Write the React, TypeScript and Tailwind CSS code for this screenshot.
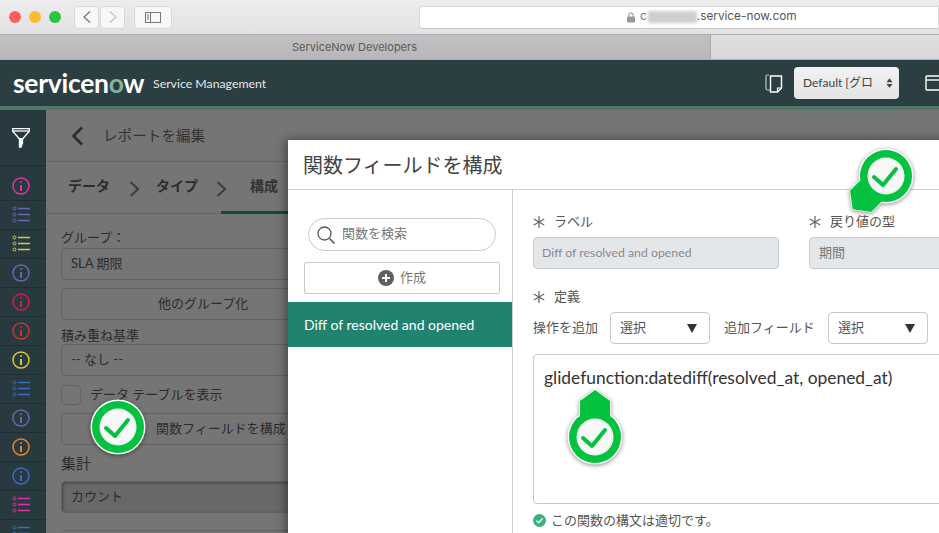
import React from 'react';

const FONT = "font-['Lato','Noto_Sans_CJK_JP',sans-serif]";

type RailItem = { kind: 'info' | 'list'; color: string };

const railItems: RailItem[] = [
  { kind: 'info', color: '#e0339f' },
  { kind: 'list', color: '#6468b0' },
  { kind: 'list', color: '#d8cb38' },
  { kind: 'info', color: '#6468b0' },
  { kind: 'info', color: '#d01f45' },
  { kind: 'info', color: '#c9352f' },
  { kind: 'info', color: '#d8cb38' },
  { kind: 'list', color: '#3a6cc0' },
  { kind: 'info', color: '#6468b0' },
  { kind: 'info', color: '#e8842c' },
  { kind: 'info', color: '#3a6cc0' },
  { kind: 'list', color: '#e0339f' },
  { kind: 'list', color: '#3a6cc0' },
];

function InfoIcon({ color }: { color: string }) {
  return (
    <svg width="20" height="20" viewBox="0 0 20 20" fill="none" stroke={color}>
      <circle cx="10" cy="10" r="8" strokeWidth="1.5" />
      <circle cx="10" cy="6" r="1" fill={color} stroke="none" />
      <path d="M10 9v6" strokeWidth="2" />
    </svg>
  );
}

function ListIcon({ color }: { color: string }) {
  return (
    <svg width="20" height="20" viewBox="0 0 20 20" fill="none" stroke={color}>
      <circle cx="3.5" cy="3.5" r="1.5" strokeWidth="1" />
      <circle cx="3.5" cy="9.5" r="1.5" strokeWidth="1" />
      <circle cx="3.5" cy="15.5" r="1.5" strokeWidth="1" />
      <path d="M7 3.5h12M7 9.5h12M7 15.5h12" strokeWidth="1.5" />
    </svg>
  );
}

function Marker({ pointer, className }: { pointer?: number; className: string }) {
  return (
    <svg
      width="120"
      height="120"
      viewBox="-60 -60 120 120"
      className={`absolute drop-shadow-[0_1px_2px_rgba(0,0,0,0.45)] ${className}`}
    >
      {pointer !== undefined && (
        <path
          transform={`rotate(${pointer})`}
          d="M0 -47 L15 -36 L15 -15 L-15 -15 L-15 -36 Z"
          fill="#04c23f"
          stroke="#fff"
          strokeWidth="1.5"
        />
      )}
      <circle r="27.5" fill="#fff" />
      {pointer !== undefined && (
        <path transform={`rotate(${pointer})`} d="M0 -47 L15 -36 L15 -15 L-15 -15 L-15 -36 Z" fill="#04c23f" />
      )}
      <circle r="26" fill="#04c23f" />
      <circle r="18.5" fill="#fff" />
      <circle r="17.5" fill="#f8f8f8" stroke="#ddd" strokeWidth="0.75" />
      <path d="M-12 1 L-3 9 L10 -7" fill="none" stroke="#04c23f" strokeWidth="4" strokeLinecap="round" strokeLinejoin="round" />
    </svg>
  );
}

function Chrome() {
  return (
    <>
      <div className="flex h-[34px] items-center bg-gradient-to-b from-[#eeecee] to-[#e3e1e3] pl-[9px]">
        <div className="flex gap-2">
          <span className="h-3 w-3 rounded-full bg-[#fc5f57]" />
          <span className="h-3 w-3 rounded-full bg-[#fdbb2e]" />
          <span className="h-3 w-3 rounded-full bg-[#29c73f]" />
        </div>
        <div className="ml-[13px] flex gap-px">
          <div className="flex h-[23px] w-[25px] items-center justify-center rounded border border-[#d9d7d9] bg-[#f8f7f8]">
            <svg width="10" height="14" viewBox="0 0 10 14" fill="none" stroke="#777" strokeWidth="1.3">
              <path d="M8 1.5 2 7l6 5.5" />
            </svg>
          </div>
          <div className="flex h-[23px] w-[25px] items-center justify-center rounded border border-[#d9d7d9] bg-[#f8f7f8]">
            <svg width="10" height="14" viewBox="0 0 10 14" fill="none" stroke="#c4c4c4" strokeWidth="1.3">
              <path d="M2 1.5 8 7l-6 5.5" />
            </svg>
          </div>
        </div>
        <div className="ml-[9px] flex h-[23px] w-[38px] items-center justify-center rounded border border-[#d9d7d9] bg-[#f8f7f8]">
          <svg width="16" height="13" viewBox="0 0 16 13" fill="none" stroke="#777">
            <rect x="0.5" y="1.5" width="15" height="10" />
            <path d="M5.5 1.5v10M2 4h2M2 6h2M2 8h2" />
          </svg>
        </div>
        <div className="ml-[247px] flex h-[23px] flex-1 items-center rounded-l border border-[#dcdadc] border-b-[#c8c8c8] bg-white pl-[206px] text-[11.8px] text-[#555] font-['Inter',sans-serif]">
          <svg width="10" height="11" viewBox="0 0 10 11" className="mr-[4px]">
            <rect x="1" y="4.5" width="8" height="6" rx="1" fill="#999" />
            <path d="M2.8 5V3.2a2.2 2.2 0 0 1 4.4 0V5" fill="none" stroke="#999" strokeWidth="1.1" />
          </svg>
          <span className="mr-px text-[#777]">c</span>
          <span className="h-[12px] w-[49px] bg-[#cfcfcf] blur-[1.5px]" />
          <span>.service-now.com</span>
        </div>
      </div>
      <div className="flex h-[26px] border-y border-[#b0aeb0]">
        <div className="flex w-[711px] items-center justify-center border-r border-[#a9a7a9] bg-gradient-to-b from-[#c2c0c2] to-[#b8b6b8] pr-[1px] text-[11px] text-[#5a5a5a] font-['Inter',sans-serif]">
          ServiceNow Developers
        </div>
        <div className="flex-1 bg-gradient-to-b from-[#e0dee0] to-[#d9d7d9]" />
      </div>
    </>
  );
}

function AppHeader() {
  return (
    <div className="flex h-[46px] items-center bg-[#2b3e42] pl-[13px]">
      <span className="w-[130px] shrink-0 text-[26.5px] leading-none font-bold tracking-[-0.3px] text-white font-['Lato',sans-serif]">
        servicen<span className="text-[#81b5a1]">o</span>w
      </span>
      <span className="ml-[10px] mt-[3px] w-[114px] shrink-0 whitespace-nowrap text-[12.3px] text-[#e4e8e8] font-['Lato',sans-serif]">
        Service Management
      </span>
      <svg width="18" height="20" viewBox="0 0 18 20" fill="none" stroke="#fff" strokeWidth="1.2" className="ml-[498px] shrink-0">
        <path d="M4 2H2.5A1.5 1.5 0 0 0 1 3.5v12A1.5 1.5 0 0 0 2.5 17H5" strokeOpacity="0.7" />
        <path d="M5.5 3h11v12l-4 4h-7z" strokeWidth="1.4" />
        <path d="M12.5 19v-4h4" />
      </svg>
      <div className={`ml-[11px] flex h-[32px] w-[105px] shrink-0 items-center justify-between rounded bg-gradient-to-b from-[#f2f2f2] to-[#e4e4e4] pl-[9px] pr-[6px] text-[12px] text-[#444] ${FONT}`}>
        <span>Default [グロ</span>
        <svg width="7" height="12" viewBox="0 0 8 12" fill="#444">
          <path d="M4 0.5 7.5 5H.5zM4 11.5 7.5 7H.5z" />
        </svg>
      </div>
      <svg width="20" height="18" viewBox="0 0 20 18" fill="none" stroke="#fff" strokeWidth="1.4" className="ml-[26px] shrink-0">
        <rect x="1" y="2" width="18" height="14" rx="1" />
        <path d="M1 6h18" />
      </svg>
    </div>
  );
}

function Rail() {
  return (
    <div className="flex w-[46px] shrink-0 flex-col bg-[#283a3f] pr-[4px]">
      <div className="-mr-[4px] flex h-[56px] shrink-0 items-center border-b border-[#1f2e32] pl-[12px]">
        <svg width="18" height="20" viewBox="0 0 18 20" fill="none" stroke="#fff" strokeWidth="1.3">
          <path d="M.7 .7h16.6v2.6L10.5 11h-3L.7 3.3z" />
          <path d="M.7 3h16.6" />
          <path d="M7.5 11h3v4l-1.5 4h-1.5z" fill="#fff" />
        </svg>
      </div>
      <div className="h-[6px] shrink-0" />
      {railItems.map((item, i) => (
        <div key={i} className="-mr-[4px] flex h-[29px] shrink-0 items-center border-b border-[#1f2e32] pl-[11px]">
          {item.kind === 'info' ? <InfoIcon color={item.color} /> : <ListIcon color={item.color} />}
        </div>
      ))}
    </div>
  );
}

function FieldBox({ children, className = '' }: { children?: React.ReactNode; className?: string }) {
  return (
    <div className={`flex h-[32px] shrink-0 items-center rounded border border-[#636363] pl-[9px] text-[13px] text-[#2c2c2c] ${className}`}>
      {children}
    </div>
  );
}

function Chevron() {
  return (
    <svg width="11" height="16" viewBox="0 0 11 16" fill="none" stroke="#3f3f3f" strokeWidth="2.2">
      <path d="M1.5 1 9 8l-7.5 7" />
    </svg>
  );
}

function ReportEditor() {
  return (
    <div className={`flex-1 bg-[#757575] text-[#2c2c2c] ${FONT}`}>
      <div className="flex h-[52px] items-center border-b border-[#656565] pl-[25px]">
        <svg width="13" height="20" viewBox="0 0 13 20" fill="none" stroke="#2c2c2c" strokeWidth="2.6">
          <path d="M11 1.5 2.5 10l8.5 8.5" />
        </svg>
        <span className="ml-[19px] text-[14.6px] text-[#333]">レポートを編集</span>
      </div>
      <div className="flex h-[52px] items-center border-b border-[#656565] pl-[22px] text-[14px] font-bold">
        <span className="mb-[4px]">データ</span>
        <span className="ml-[19px] mt-[2px]"><Chevron /></span>
        <span className="ml-[16px] mb-[4px]">タイプ</span>
        <span className="ml-[18px] mt-[2px]"><Chevron /></span>
        <span className="-ml-[6px] flex h-[52px] w-[67px] items-center border-b-[3px] border-[#0e4a42] pb-[2px] pl-[29px] text-[#333]">
          構成
        </span>
      </div>
      <div className="flex flex-col pl-[15px] text-[13px]">
        <div className="mt-[14px] leading-[18px]">グループ：</div>
        <FieldBox className="mt-[2px]">SLA 期限</FieldBox>
        <FieldBox className="mt-[8px] pl-[96px]">他のグループ化</FieldBox>
        <div className="mt-[6px] leading-[18px]">積み重ね基準</div>
        <FieldBox>-- なし --</FieldBox>
        <div className="mt-[9px] flex h-[20px] items-center">
          <span className="h-[20px] w-[20px] rounded border border-[#636363]" />
          <span className="ml-[9px]">データ テーブルを表示</span>
        </div>
        <FieldBox className="mt-[8px] pl-[94px]">関数フィールドを構成</FieldBox>
        <div className="mt-[8px] text-[15px] leading-[20px]">集計</div>
        <FieldBox className="mt-[8px] bg-[#686868] shadow-[inset_1px_1px_3px_rgba(0,0,0,0.35)]">カウント</FieldBox>
        <FieldBox className="mt-[17px]" />
      </div>
    </div>
  );
}

function Asterisk() {
  return (
    <svg width="12" height="12" viewBox="0 0 12 12" stroke="#666" strokeWidth="1.2" className="mr-[9px] shrink-0">
      <path d="M6 0v12M.8 3l10.4 6M11.2 3 .8 9" />
    </svg>
  );
}

function SelectBox() {
  return (
    <div className="flex h-[32px] w-[100px] shrink-0 items-center justify-between rounded border border-[#c9c9c9] pl-[9px] pr-[12px] text-[13px] text-[#555]">
      <span>選択</span>
      <svg width="10" height="9" viewBox="0 0 10 9" fill="#333">
        <path d="M0 0h10L5 9z" />
      </svg>
    </div>
  );
}

function FunctionModal() {
  return (
    <div className={`absolute left-[288px] top-[140px] flex h-[420px] w-[700px] flex-col bg-white shadow-[-2px_0_10px_rgba(0,0,0,0.45)] ${FONT}`}>
      <div className="flex h-[50px] shrink-0 items-center border-b border-[#cfcfcf] pl-[15px] text-[20px] text-[#444]">
        関数フィールドを構成
      </div>
      <div className="flex flex-1">
        <div className="w-[225px] shrink-0 border-r border-[#cfcfcf]">
          <div className="ml-[20px] mt-[28px] flex h-[33px] w-[188px] items-center rounded-full border border-[#c9c9c9] pb-[2px] pl-[7px] text-[13px] text-[#777]">
            <svg width="20" height="20" viewBox="0 0 20 20" fill="none" stroke="#555" strokeWidth="1.3" className="mt-[2px]">
              <circle cx="8.5" cy="8.5" r="6.5" />
              <path d="m13.5 13.5 5 5" strokeWidth="1.6" />
            </svg>
            <span className="ml-[6px]">関数を検索</span>
          </div>
          <div className="ml-[16px] mt-[11px] flex h-[32px] w-[196px] items-center justify-center rounded-[2px] border border-[#c9c9c9] text-[13px] text-[#777]">
            <svg width="16" height="16" viewBox="0 0 16 16" className="mr-[6px]">
              <circle cx="8" cy="8" r="8" fill="#5f5f5f" />
              <path d="M8 4v8M4 8h8" stroke="#fff" strokeWidth="2" />
            </svg>
            作成
          </div>
          <div className="mt-[8px] flex h-[45px] items-center bg-[#218270] pl-[16px] text-[14px] text-white">
            Diff of resolved and opened
          </div>
        </div>
        <div className="flex-1 pl-[20px]">
          <div className="mt-[23px] flex gap-[30px]">
            <div className="w-[246px]">
              <div className="flex h-[18px] items-center text-[13px] text-[#555]">
                <Asterisk />
                ラベル
              </div>
              <div className="mt-[6px] flex h-[32px] items-center rounded border border-[#c9cdd0] bg-[#e4e7ea] pl-[8px] text-[12.3px] text-[#8a8a8a]">
                Diff of resolved and opened
              </div>
            </div>
            <div className="w-[200px]">
              <div className="flex h-[18px] items-center text-[13px] text-[#555]">
                <Asterisk />
                戻り値の型
              </div>
              <div className="mt-[6px] flex h-[32px] items-center rounded border border-[#c9cdd0] bg-[#e4e7ea] pl-[9px] text-[13px] text-[#777]">
                期間
              </div>
            </div>
          </div>
          <div className="mt-[19px] flex h-[18px] items-center text-[13px] text-[#555]">
            <Asterisk />
            定義
          </div>
          <div className="mt-[6px] flex items-center text-[13px] text-[#555]">
            <span className="w-[77px]">操作を追加</span>
            <SelectBox />
            <span className="ml-[14px] w-[104px]">追加フィールド</span>
            <SelectBox />
          </div>
          <div className="mt-[10px] h-[150px] w-[500px] rounded border border-[#c9c9c9] pl-[10px] pt-[11px] text-[17.4px] leading-[24px] text-[#333]">
            glidefunction:datediff(resolved_at, opened_at)
          </div>
          <div className="mt-[7px] flex items-center text-[13px] text-[#555]">
            <svg width="13" height="13" viewBox="0 0 13 13" className="mr-[5px]">
              <circle cx="6.5" cy="6.5" r="6.5" fill="#39b27f" />
              <path d="m3.5 6.7 2.2 2.1 3.8-4.2" fill="none" stroke="#fff" strokeWidth="1.5" />
            </svg>
            この関数の構文は適切です。
          </div>
        </div>
      </div>
    </div>
  );
}

export default function App() {
  return (
    <div className="relative h-[533px] w-[939px] overflow-hidden bg-[#757575]">
      <Chrome />
      <AppHeader />
      <div className="h-[4px] bg-[#527868]" />
      <div className="flex h-[423px] overflow-hidden">
        <Rail />
        <ReportEditor />
      </div>
      <FunctionModal />
      <Marker className="left-[58px] top-[367px]" />
      <Marker pointer={225} className="left-[826px] top-[116px]" />
      <Marker pointer={0} className="left-[535px] top-[377px]" />
    </div>
  );
}
